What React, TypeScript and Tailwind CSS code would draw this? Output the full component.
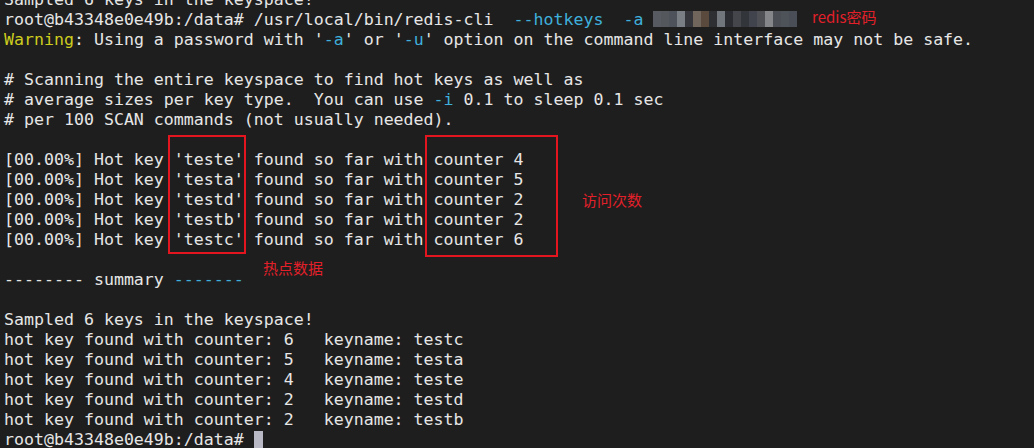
const mono = { fontFamily: '"DejaVu Sans Mono", "Liberation Mono", monospace' };

const cyan = "text-[#3fb0dc]";

function Line({ children }: { children?: React.ReactNode }) {
  return <div className="h-[20px] leading-[20px] whitespace-pre">{children ?? " "}</div>;
}

const pwBlocks = [
  "#6b6f78", "#8a8f99", "#5e6470", "#9aa0aa", "#4a4e58", "#8c7f70", "#6e5a48",
  "#3c3f46", "#8d939c", "#2f3238", "#6a6e78", "#3a3d44", "#4e525c", "#7d828c",
  "#a7a9ad", "#5b6068", "#7b8894", "#5a5f69",
];

function Password() {
  return (
    <span className="inline-flex align-middle h-[16px] -mt-[4px]">
      {pwBlocks.map((c, i) => (
        <span key={i} className="w-[8px] h-[16px] inline-block" style={{ backgroundColor: c, opacity: i % 3 === 1 ? 0.5 : 0.75 }} />
      ))}
    </span>
  );
}

export default function App() {
  const hot = [
    ["teste", "4"],
    ["testa", "5"],
    ["testd", "2"],
    ["testb", "2"],
    ["testc", "6"],
  ];
  const summary = [
    ["6", "testc"],
    ["5", "testa"],
    ["4", "teste"],
    ["2", "testd"],
    ["2", "testb"],
  ];
  return (
    <div className="relative w-[1034px] h-[448px] overflow-hidden bg-[#1e1e1e] text-[#e6e6e6]">
      <div className="pl-[4px] -mt-[10px] text-[16.6px]" style={mono}>
        <Line>Sampled 6 keys in the keyspace!</Line>
        <Line>
          root@b43348e0e49b:/data# /usr/local/bin/redis-cli  <span className={cyan}>--hotkeys  -a</span> <Password />
        </Line>
        <Line>
          <span className="text-[#cdcd1e]">Warning</span>: Using a password with '<span className={cyan}>-a</span>' or '<span className={cyan}>-u</span>' option on the command line interface may not be safe.
        </Line>
        <Line />
        <Line># Scanning the entire keyspace to find hot keys as well as</Line>
        <Line>
          # average sizes per key type.  You can use <span className={cyan}>-i</span> 0.1 to sleep 0.1 sec
        </Line>
        <Line># per 100 SCAN commands (not usually needed).</Line>
        <Line />
        {hot.map(([k, n]) => (
          <Line key={k}>{`[00.00%] Hot key '${k}' found so far with counter ${n}`}</Line>
        ))}
        <Line />
        <Line>
          -------- summary <span className={cyan}>-------</span>
        </Line>
        <Line />
        <Line>Sampled 6 keys in the keyspace!</Line>
        {summary.map(([n, k]) => (
          <Line key={k}>{`hot key found with counter: ${n}   keyname: ${k}`}</Line>
        ))}
        <Line>
          root@b43348e0e49b:/data# <span className="inline-block w-[9px] h-[17px] align-middle -mt-[3px] bg-[#b9b9c6]" />
        </Line>
      </div>

      {/* annotations */}
      <div className="absolute left-[168px] top-[135px] w-[78px] h-[119px] border-2 border-[#e3161f]" />
      <div className="absolute left-[425px] top-[135px] w-[133px] h-[122px] border-2 border-[#e3161f]" />
      <div
        className="absolute left-[812px] top-[7px] text-[15px] leading-[20px] text-[#e3202a]"
        style={{ fontFamily: '"Noto Sans CJK SC", "Noto Sans", sans-serif' }}
      >
        redis密码
      </div>
      <div
        className="absolute left-[582px] top-[190px] text-[15px] leading-[20px] text-[#e3202a]"
        style={{ fontFamily: '"Noto Sans CJK SC", sans-serif' }}
      >
        访问次数
      </div>
      <div
        className="absolute left-[263px] top-[258px] text-[15px] leading-[20px] text-[#e3202a]"
        style={{ fontFamily: '"Noto Sans CJK SC", sans-serif' }}
      >
        热点数据
      </div>
    </div>
  );
}
